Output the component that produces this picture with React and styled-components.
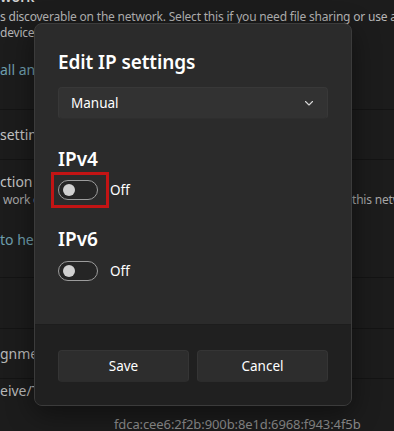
import React from "react";
import styled, { createGlobalStyle } from "styled-components";

const Global = createGlobalStyle`
  html, body { margin: 0; padding: 0; background: #1c1c1c; }
  body { width: 394px; height: 431px; overflow: hidden; font-family: "Noto Sans", "Open Sans", sans-serif; }
  #root { position: relative; width: 394px; height: 431px; overflow: hidden; }
`;

const Page = styled.div`
  display: flex;
  flex-direction: column;
  width: 394px;
  height: 431px;
  background: #1c1c1c;
  color: #b4b4b4;
`;

const Row = styled.div`
  display: flex;
  flex-direction: column;
  justify-content: ${(p) => (p.$center ? "center" : "flex-start")};
  height: ${(p) => p.$h}px;
  border-bottom: 1px solid #141414;
  white-space: nowrap;
  overflow: hidden;
  flex-shrink: 0;
`;

const Stack = styled.div`
  display: flex;
  flex-direction: column;
  margin-top: ${(p) => p.$top || 0}px;
`;

const Heading = styled.div`
  font-size: 14px;
  line-height: 20px;
  font-weight: 600;
  color: #cfcfcf;
`;

const Text = styled.div`
  font-size: ${(p) => p.$size || 14}px;
  line-height: ${(p) => p.$lh || 20}px;
  letter-spacing: ${(p) => p.$ls || 0}px;
  color: ${(p) => p.$color || "#b8b8b8"};
  margin-top: ${(p) => p.$mt || 0}px;
  padding-left: ${(p) => p.$pl || 0}px;
`;

const Link = styled.div`
  font-size: 14px;
  line-height: 20px;
  color: #6f9fae;
  margin-top: ${(p) => p.$mt || 0}px;
`;

const SplitLine = styled.div`
  display: flex;
  font-size: 12px;
  line-height: 16px;
  letter-spacing: -0.2px;
  color: #a6a6a6;
`;

const Hidden = styled.span`
  width: ${(p) => p.$w}px;
  flex-shrink: 0;
  overflow: hidden;
`;

/* Dialog */
const Dialog = styled.div`
  position: absolute;
  left: 34px;
  top: 23px;
  width: 318px;
  height: 383px;
  box-sizing: border-box;
  border: 1px solid #3b3b3b;
  border-radius: 8px;
  background: #2b2b2b;
  overflow: hidden;
  display: flex;
  flex-direction: column;
  box-shadow: 0 8px 28px rgba(0, 0, 0, 0.45);
  font-family: "Noto Sans", "Open Sans", sans-serif;
  color: #ffffff;
`;

const Body = styled.div`
  flex: 1;
  display: flex;
  flex-direction: column;
  padding: 24px 23px 0 23px;
`;

const Title = styled.h2`
  margin: 0;
  font-size: 19px;
  line-height: 28px;
  font-weight: 600;
  letter-spacing: -0.1px;
`;

const Select = styled.div`
  margin-top: 11px;
  height: 32px;
  box-sizing: border-box;
  display: flex;
  align-items: center;
  justify-content: space-between;
  padding: 0 12px 0 12px;
  background: #323232;
  border: 1px solid #383838;
  border-bottom-color: #2e2e2e;
  border-radius: 4px;
  font-size: 13.5px;
  color: #ffffff;
`;

const SectionLabel = styled.div`
  margin-top: ${(p) => p.$mt}px;
  font-size: 19px;
  line-height: 28px;
  font-weight: 600;
`;

const ToggleRow = styled.div`
  position: relative;
  margin-top: ${(p) => p.$mt}px;
  display: flex;
  align-items: center;
  gap: 12px;
  height: 20px;
`;

const Track = styled.div`
  width: 40px;
  height: 20px;
  box-sizing: border-box;
  border: 1px solid #9c9c9c;
  border-radius: 10px;
  background: rgba(0, 0, 0, 0.12);
  display: flex;
  align-items: center;
  padding-left: 4px;
`;

const Knob = styled.div`
  width: 12px;
  height: 12px;
  border-radius: 50%;
  background: #d0d0d0;
`;

const ToggleText = styled.span`
  font-size: 13.5px;
  line-height: 20px;
  color: #ffffff;
`;

const Highlight = styled.div`
  position: absolute;
  left: -7px;
  top: -8px;
  width: 58px;
  height: 36px;
  box-sizing: border-box;
  border: 3px solid #c21414;
  pointer-events: none;
`;

const Footer = styled.div`
  display: grid;
  grid-template-columns: 1fr 1fr;
  gap: 8px;
  padding: 25px 23px 23px 23px;
  background: #202020;
  border-top: 1px solid #1d1d1d;
`;

const Button = styled.button`
  height: 32px;
  border-radius: 4px;
  border: 1px solid #353535;
  border-bottom-color: #2c2c2c;
  background: #2d2d2d;
  color: #ffffff;
  font-family: "Noto Sans", "Open Sans", sans-serif;
  font-size: 13.5px;
  padding: 0;
`;

function Toggle({ highlight, mt }) {
  return (
    <ToggleRow $mt={mt}>
      {highlight && <Highlight />}
      <Track>
        <Knob />
      </Track>
      <ToggleText>Off</ToggleText>
    </ToggleRow>
  );
}

function Chevron() {
  return (
    <svg width="12" height="12" viewBox="0 0 12 12" fill="none">
      <path d="M2.5 4.5 L6 8 L9.5 4.5" stroke="#d6d6d6" strokeWidth="1.1" strokeLinecap="round" strokeLinejoin="round" />
    </svg>
  );
}

export default function App() {
  return (
    <>
      <Global />
      <Page>
        <Row $h={109}>
          <Stack $top={-13}>
            <Heading>work</Heading>
            <Text $size={12} $lh={16} $ls={-0.2} $mt={2} $color="#b6b6b6">
              s discoverable on the network. Select this if you need file sharing or use apps
            </Text>
            <Text $size={12} $lh={16} $ls={-0.2} $color="#b6b6b6">devices</Text>
            <Link $mt={19}>all and</Link>
          </Stack>
        </Row>
        <Row $h={49} $center>
          <Text $color="#c4c4c4">setting</Text>
        </Row>
        <Row $h={117}>
          <Stack $top={12}>
            <Text $color="#c4c4c4">ction</Text>
            <SplitLine>
              <Hidden $w={352}>&nbsp;work or school network or that you trust to share files on</Hidden>
              <span>this network</span>
            </SplitLine>
            <Link $mt={22}>to hel</Link>
          </Stack>
        </Row>
        <Row $h={50} />
        <Row $h={49} $center>
          <Text $color="#b8b8b8">gnme</Text>
        </Row>
        <Row $h={60}>
          <Stack $top={2}>
            <Text $color="#b8b8b8">eive/T</Text>
            <Text $size={13} $ls={-0.1} $color="#8c8c8c" $mt={13} $pl={114}>
              fdca:cee6:2f2b:900b:8e1d:6968:f943:4f5b
            </Text>
          </Stack>
        </Row>
      </Page>

      <Dialog>
        <Body>
          <Title>Edit IP settings</Title>
          <Select>
            <span>Manual</span>
            <Chevron />
          </Select>
          <SectionLabel $mt={26}>IPv4</SectionLabel>
          <Toggle highlight mt={7} />
          <SectionLabel $mt={25}>IPv6</SectionLabel>
          <Toggle mt={8} />
        </Body>
        <Footer>
          <Button>Save</Button>
          <Button>Cancel</Button>
        </Footer>
      </Dialog>
    </>
  );
}
